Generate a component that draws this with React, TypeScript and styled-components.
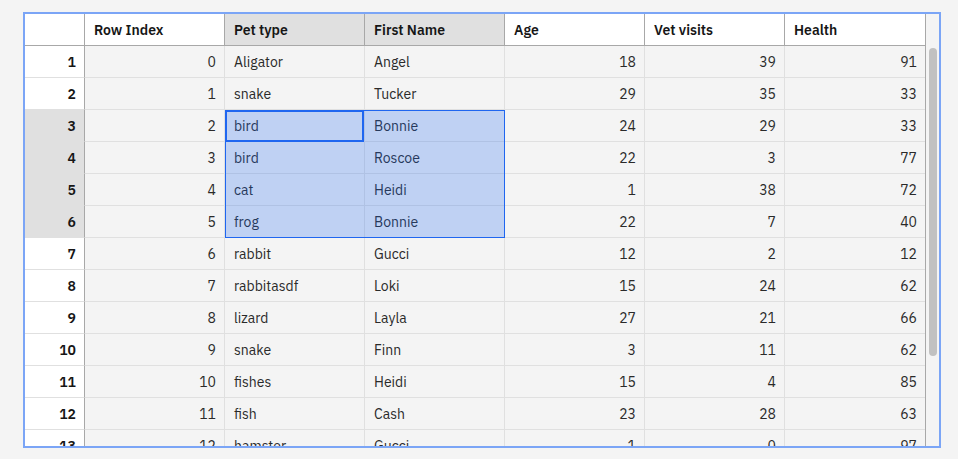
import React from "react";
import styled, { createGlobalStyle, css } from "styled-components";

const Global = createGlobalStyle`
  html, body { margin: 0; padding: 0; background: #f4f4f4; }
  body { font-family: "IBM Plex Sans", "Noto Sans", "Liberation Sans", sans-serif; color: #161616; }
`;

const Page = styled.div`
  padding: 12px 0 0 23px;
`;

const Frame = styled.div`
  width: 914px;
  height: 432px;
  border: 2px solid #7ba5f6;
  display: flex;
  background: #f4f4f4;
`;

const GridArea = styled.div`
  position: relative;
  width: 900px;
  height: 432px;
  overflow: hidden;
  border-right: 1px solid #a8a8a8;
  box-sizing: content-box;
  margin-right: -1px;
`;

const Grid = styled.div`
  display: grid;
  grid-template-columns: 60px repeat(6, 140px);
  grid-auto-rows: 32px;
`;

const HeaderCell = styled.div<{ $sel?: boolean; $corner?: boolean }>`
  box-sizing: border-box;
  background: ${(p) => (p.$sel ? "#e0e0e0" : "#ffffff")};
  border-right: 1px solid #a8a8a8;
  border-bottom: 1px solid #a8a8a8;
  font-size: 14px;
  font-weight: 600;
  display: flex;
  align-items: center;
  padding: 0 9px;
  white-space: nowrap;
  ${(p) => p.$corner && css`background: #ffffff;`}
  &:nth-child(7) { border-right: none; }
`;

const RowHead = styled.div<{ $sel?: boolean }>`
  box-sizing: border-box;
  background: ${(p) => (p.$sel ? "#e0e0e0" : "#ffffff")};
  border-right: 1px solid #a8a8a8;
  border-bottom: 1px solid #e0e0e0;
  font-size: 14px;
  font-weight: 600;
  display: flex;
  align-items: center;
  justify-content: flex-end;
  padding: 1px 8px 0;
`;

const Cell = styled.div<{ $num?: boolean; $last?: boolean }>`
  box-sizing: border-box;
  background: #f4f4f4;
  border-right: ${(p) => (p.$last ? "none" : "1px solid #e0e0e0")};
  border-bottom: 1px solid #e0e0e0;
  font-size: 14px;
  display: flex;
  align-items: center;
  justify-content: ${(p) => (p.$num ? "flex-end" : "flex-start")};
  padding: ${(p) => (p.$num ? "1px 8px 0 9px" : "1px 9px 0")};
  color: #2a2a2a;
  white-space: nowrap;
`;

const Selection = styled.div`
  position: absolute;
  left: 200px;
  top: 96px;
  width: 280px;
  height: 128px;
  box-sizing: border-box;
  border: 1px solid #1f66f0;
  background: rgba(31, 102, 240, 0.25);
  pointer-events: none;
`;

const Focus = styled.div`
  position: absolute;
  left: 200px;
  top: 96px;
  width: 139px;
  height: 32px;
  box-sizing: border-box;
  border: 2px solid #1f66f0;
  pointer-events: none;
`;

const ScrollTrack = styled.div`
  width: 14px;
  height: 432px;
  box-sizing: border-box;
  padding: 34px 2px 0 4px;
  background: #f4f4f4;
`;

const Thumb = styled.div`
  width: 8px;
  height: 308px;
  border-radius: 4px;
  background: #c1c1c1;
`;

const columns = ["Row Index", "Pet type", "First Name", "Age", "Vet visits", "Health"];
const selectedCols = [1, 2];
const numeric = [true, false, false, true, true, true];

const rows: (string | number)[][] = [
  [0, "Aligator", "Angel", 18, 39, 91],
  [1, "snake", "Tucker", 29, 35, 33],
  [2, "bird", "Bonnie", 24, 29, 33],
  [3, "bird", "Roscoe", 22, 3, 77],
  [4, "cat", "Heidi", 1, 38, 72],
  [5, "frog", "Bonnie", 22, 7, 40],
  [6, "rabbit", "Gucci", 12, 2, 12],
  [7, "rabbitasdf", "Loki", 15, 24, 62],
  [8, "lizard", "Layla", 27, 21, 66],
  [9, "snake", "Finn", 3, 11, 62],
  [10, "fishes", "Heidi", 15, 4, 85],
  [11, "fish", "Cash", 23, 28, 63],
  [12, "hamster", "Gucci", 1, 0, 97],
];

export default function App() {
  return (
    <Page>
      <Global />
      <Frame>
        <GridArea>
          <Grid>
            <HeaderCell $corner />
            {columns.map((c, i) => (
              <HeaderCell key={c} $sel={selectedCols.includes(i)}>
                {c}
              </HeaderCell>
            ))}
            {rows.map((r, ri) => (
              <React.Fragment key={ri}>
                <RowHead $sel={ri >= 2 && ri <= 5}>{ri + 1}</RowHead>
                {r.map((v, ci) => (
                  <Cell key={ci} $num={numeric[ci]} $last={ci === 5}>
                    {v}
                  </Cell>
                ))}
              </React.Fragment>
            ))}
          </Grid>
          <Selection />
          <Focus />
        </GridArea>
        <ScrollTrack>
          <Thumb />
        </ScrollTrack>
      </Frame>
    </Page>
  );
}
